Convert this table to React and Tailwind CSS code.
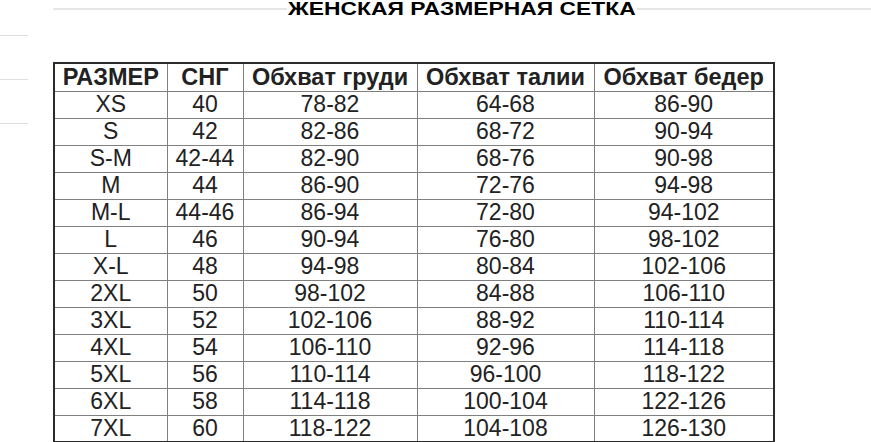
const rows = [
  ["XS", "40", "78-82", "64-68", "86-90"],
  ["S", "42", "82-86", "68-72", "90-94"],
  ["S-M", "42-44", "82-90", "68-76", "90-98"],
  ["M", "44", "86-90", "72-76", "94-98"],
  ["M-L", "44-46", "86-94", "72-80", "94-102"],
  ["L", "46", "90-94", "76-80", "98-102"],
  ["X-L", "48", "94-98", "80-84", "102-106"],
  ["2XL", "50", "98-102", "84-88", "106-110"],
  ["3XL", "52", "102-106", "88-92", "110-114"],
  ["4XL", "54", "106-110", "92-96", "114-118"],
  ["5XL", "56", "110-114", "96-100", "118-122"],
  ["6XL", "58", "114-118", "100-104", "122-126"],
  ["7XL", "60", "118-122", "104-108", "126-130"],
];

const headers = ["РАЗМЕР", "СНГ", "Обхват груди", "Обхват талии", "Обхват бедер"];
const widths = ["w-[113px]", "w-[76px]", "w-[174px]", "w-[177px]", "w-[180px]"];

export default function App() {
  return (
    <div className="w-[871px] h-[442px] overflow-hidden bg-white flex font-['Liberation_Sans',Arial,sans-serif]">
      {/* sidebar stub */}
      <div className="w-[28px] shrink-0 flex flex-col gap-[43px] pt-[35px]">
        <div className="h-px bg-[#dedede]" />
        <div className="h-px bg-[#dedede]" />
        <div className="h-px bg-[#dedede]" />
      </div>

      <div className="ml-[25px] flex-1 flex flex-col">
        {/* title */}
        <div className="flex items-center gap-[4px] h-[18px]">
          <div className="flex-1 h-[2px] bg-[#e6e6e6]" />
          <h2 className="w-[342px] text-center text-[18px] leading-none font-bold text-black whitespace-nowrap">
            <span className="inline-block scale-x-[1.27]">ЖЕНСКАЯ РАЗМЕРНАЯ СЕТКА</span>
          </h2>
          <div className="flex-1 h-[2px] bg-[#e6e6e6]" />
        </div>

        <table className="mt-[44px] w-[720px] border-collapse border-2 border-[#2b2b2b] text-[#222] table-fixed">
          <thead>
            <tr className="h-[28px]">
              {headers.map((h, i) => (
                <th
                  key={h}
                  className={`${widths[i]} border border-[#808080] px-0 text-[23.5px] leading-none font-bold text-center whitespace-nowrap`}
                >
                  {h}
                </th>
              ))}
            </tr>
          </thead>
          <tbody>
            {rows.map((r) => (
              <tr key={r[0]} className="h-[27px]">
                {r.map((c, i) => (
                  <td key={i} className="border border-[#808080] text-[23px] leading-none text-center p-0">
                    {c}
                  </td>
                ))}
              </tr>
            ))}
          </tbody>
        </table>
      </div>
    </div>
  );
}
